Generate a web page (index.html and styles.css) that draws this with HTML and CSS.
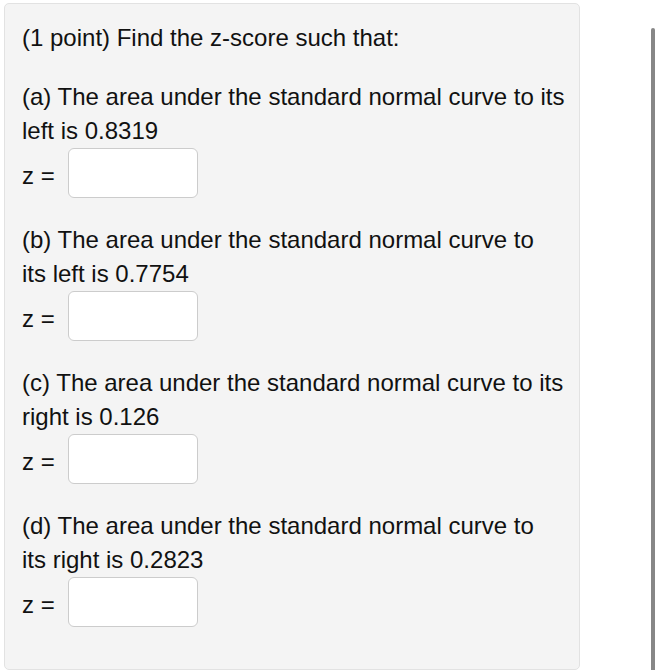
FILE: index.html
```html
<!DOCTYPE html>
<html>
<head>
<meta charset="utf-8">
<link rel="stylesheet" href="styles.css">
</head>
<body>
<div class="card">
  <p class="title">(1 point) Find the z-score such that:</p>
  <div class="part">
    <p class="q">(a) The area under the standard normal curve to its<br>left is 0.8319</p>
    <div class="answer"><span class="lbl">z =</span><span class="box"></span></div>
  </div>
  <div class="part">
    <p class="q">(b) The area under the standard normal curve to<br>its left is 0.7754</p>
    <div class="answer"><span class="lbl">z =</span><span class="box"></span></div>
  </div>
  <div class="part">
    <p class="q">(c) The area under the standard normal curve to its<br>right is 0.126</p>
    <div class="answer"><span class="lbl">z =</span><span class="box"></span></div>
  </div>
  <div class="part">
    <p class="q">(d) The area under the standard normal curve to<br>its right is 0.2823</p>
    <div class="answer"><span class="lbl">z =</span><span class="box"></span></div>
  </div>
</div>
<div class="scrollbar"></div>
</body>
</html>
```

FILE: styles.css
```css
html, body {
  margin: 0;
  padding: 0;
  background: #ffffff;
  height: 670px;
  overflow: hidden;
}
body {
  font-family: "Liberation Sans", Arial, sans-serif;
  color: #111111;
  font-size: 24px;
  line-height: 34px;
}
.card {
  margin: 3px 0 0 4px;
  width: 557px;
  height: 648px;
  padding: 17px 0 0 17px;
  background: #f4f4f4;
  border: 1px solid #e2e2e2;
  border-radius: 5px;
}
p {
  margin: 0;
}
.part {
  margin-top: 25px;
}
.answer {
  display: flex;
  align-items: center;
}
.lbl {
  width: 46px;
  position: relative;
  top: 3px;
}
.box {
  display: block;
  width: 128px;
  height: 48px;
  background: #ffffff;
  border: 1px solid #cccccc;
  border-radius: 6px;
}
.scrollbar {
  position: absolute;
  left: 651px;
  top: 28px;
  width: 4px;
  height: 650px;
  background: #878787;
  border-radius: 2px 2px 0 0;
}
```
